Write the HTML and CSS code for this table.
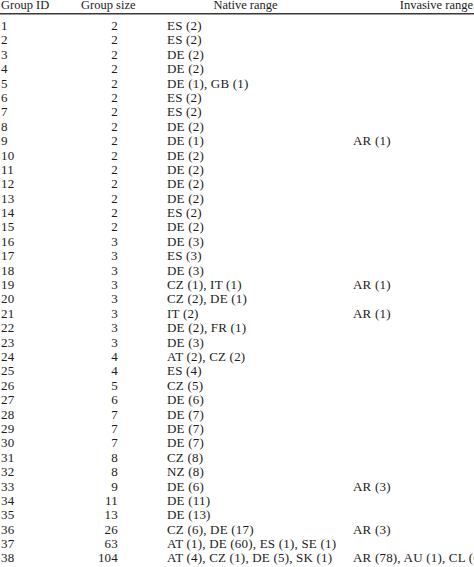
FILE: index.html
```html
<!DOCTYPE html>
<html>
<head>
<meta charset="utf-8">
<link rel="stylesheet" href="styles.css">
</head>
<body>
<div class="table">
  <div class="row head">
    <div class="c1">Group ID</div>
    <div class="c2">Group size</div>
    <div class="c3">Native range</div>
    <div class="c4">Invasive range</div>
  </div>
  <div class="body">
    <div class="row"><div class="c1">1</div><div class="c2">2</div><div class="c3">ES (2)</div><div class="c4"></div></div>
    <div class="row"><div class="c1">2</div><div class="c2">2</div><div class="c3">ES (2)</div><div class="c4"></div></div>
    <div class="row"><div class="c1">3</div><div class="c2">2</div><div class="c3">DE (2)</div><div class="c4"></div></div>
    <div class="row"><div class="c1">4</div><div class="c2">2</div><div class="c3">DE (2)</div><div class="c4"></div></div>
    <div class="row"><div class="c1">5</div><div class="c2">2</div><div class="c3">DE (1), GB (1)</div><div class="c4"></div></div>
    <div class="row"><div class="c1">6</div><div class="c2">2</div><div class="c3">ES (2)</div><div class="c4"></div></div>
    <div class="row"><div class="c1">7</div><div class="c2">2</div><div class="c3">ES (2)</div><div class="c4"></div></div>
    <div class="row"><div class="c1">8</div><div class="c2">2</div><div class="c3">DE (2)</div><div class="c4"></div></div>
    <div class="row"><div class="c1">9</div><div class="c2">2</div><div class="c3">DE (1)</div><div class="c4">AR (1)</div></div>
    <div class="row"><div class="c1">10</div><div class="c2">2</div><div class="c3">DE (2)</div><div class="c4"></div></div>
    <div class="row"><div class="c1">11</div><div class="c2">2</div><div class="c3">DE (2)</div><div class="c4"></div></div>
    <div class="row"><div class="c1">12</div><div class="c2">2</div><div class="c3">DE (2)</div><div class="c4"></div></div>
    <div class="row"><div class="c1">13</div><div class="c2">2</div><div class="c3">DE (2)</div><div class="c4"></div></div>
    <div class="row"><div class="c1">14</div><div class="c2">2</div><div class="c3">ES (2)</div><div class="c4"></div></div>
    <div class="row"><div class="c1">15</div><div class="c2">2</div><div class="c3">DE (2)</div><div class="c4"></div></div>
    <div class="row"><div class="c1">16</div><div class="c2">3</div><div class="c3">DE (3)</div><div class="c4"></div></div>
    <div class="row"><div class="c1">17</div><div class="c2">3</div><div class="c3">ES (3)</div><div class="c4"></div></div>
    <div class="row"><div class="c1">18</div><div class="c2">3</div><div class="c3">DE (3)</div><div class="c4"></div></div>
    <div class="row"><div class="c1">19</div><div class="c2">3</div><div class="c3">CZ (1), IT (1)</div><div class="c4">AR (1)</div></div>
    <div class="row"><div class="c1">20</div><div class="c2">3</div><div class="c3">CZ (2), DE (1)</div><div class="c4"></div></div>
    <div class="row"><div class="c1">21</div><div class="c2">3</div><div class="c3">IT (2)</div><div class="c4">AR (1)</div></div>
    <div class="row"><div class="c1">22</div><div class="c2">3</div><div class="c3">DE (2), FR (1)</div><div class="c4"></div></div>
    <div class="row"><div class="c1">23</div><div class="c2">3</div><div class="c3">DE (3)</div><div class="c4"></div></div>
    <div class="row"><div class="c1">24</div><div class="c2">4</div><div class="c3">AT (2), CZ (2)</div><div class="c4"></div></div>
    <div class="row"><div class="c1">25</div><div class="c2">4</div><div class="c3">ES (4)</div><div class="c4"></div></div>
    <div class="row"><div class="c1">26</div><div class="c2">5</div><div class="c3">CZ (5)</div><div class="c4"></div></div>
    <div class="row"><div class="c1">27</div><div class="c2">6</div><div class="c3">DE (6)</div><div class="c4"></div></div>
    <div class="row"><div class="c1">28</div><div class="c2">7</div><div class="c3">DE (7)</div><div class="c4"></div></div>
    <div class="row"><div class="c1">29</div><div class="c2">7</div><div class="c3">DE (7)</div><div class="c4"></div></div>
    <div class="row"><div class="c1">30</div><div class="c2">7</div><div class="c3">DE (7)</div><div class="c4"></div></div>
    <div class="row"><div class="c1">31</div><div class="c2">8</div><div class="c3">CZ (8)</div><div class="c4"></div></div>
    <div class="row"><div class="c1">32</div><div class="c2">8</div><div class="c3">NZ (8)</div><div class="c4"></div></div>
    <div class="row"><div class="c1">33</div><div class="c2">9</div><div class="c3">DE (6)</div><div class="c4">AR (3)</div></div>
    <div class="row"><div class="c1">34</div><div class="c2">11</div><div class="c3">DE (11)</div><div class="c4"></div></div>
    <div class="row"><div class="c1">35</div><div class="c2">13</div><div class="c3">DE (13)</div><div class="c4"></div></div>
    <div class="row"><div class="c1">36</div><div class="c2">26</div><div class="c3">CZ (6), DE (17)</div><div class="c4">AR (3)</div></div>
    <div class="row"><div class="c1">37</div><div class="c2">63</div><div class="c3">AT (1), DE (60), ES (1), SE (1)</div><div class="c4"></div></div>
    <div class="row"><div class="c1">38</div><div class="c2">104</div><div class="c3">AT (4), CZ (1), DE (5), SK (1)</div><div class="c4">AR (78), AU (1), CL (6)</div></div>
  </div>
</div>
</body>
</html>
```
FILE: styles.css
```css
html, body {
  margin: 0;
  padding: 0;
  background: #ffffff;
  overflow: hidden;
}
body {
  width: 474px;
  height: 567px;
  font-family: "Liberation Serif", "Times New Roman", serif;
  font-size: 13px;
  color: #1c1c1c;
}
.table {
  margin-top: -2px;
}
.row {
  display: grid;
  grid-template-columns: 80px 58px 215px 121px;
  height: 14.4px;
  line-height: 14.4px;
  white-space: nowrap;
}
.body .row {
  letter-spacing: 0.2px;
}
.head {
  height: 15px;
  font-size: 12.5px;
  border-bottom: 1px solid #3a3a3a;
  box-shadow: 0 1px 0 #9a9a9a;
}
.body {
  padding-top: 5px;
}
.c1 {
  padding-left: 1px;
}
.body .c2 {
  text-align: right;
  padding-right: 20px;
}
.head .c2 {
  padding-left: 1px;
}
.head .c3 {
  text-align: center;
}
.body .c3 {
  padding-left: 29px;
}
.head .c4 {
  text-align: right;
  padding-right: 1px;
}
```
